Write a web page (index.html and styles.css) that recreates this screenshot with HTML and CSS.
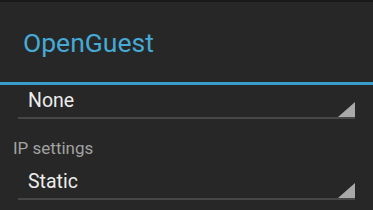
FILE: index.html
```html
<!DOCTYPE html>
<html>
<head>
<meta charset="utf-8">
<link rel="stylesheet" href="styles.css">
</head>
<body>
<div class="screen">
  <div class="topline"></div>
  <div class="header"><span class="title">OpenGuest</span></div>
  <div class="divider"></div>
  <div class="content">
    <div class="spinner first">
      <span class="value">None</span>
      <svg class="tri" width="17" height="15" viewBox="0 0 17 15"><polygon points="17,0 17,15 0,15" fill="#a9a9a9"/></svg>
    </div>
    <div class="label">IP settings</div>
    <div class="spinner">
      <span class="value">Static</span>
      <svg class="tri" width="17" height="15" viewBox="0 0 17 15"><polygon points="17,0 17,15 0,15" fill="#a9a9a9"/></svg>
    </div>
  </div>
</div>
</body>
</html>
```
FILE: styles.css
```css
html, body {
  margin: 0;
  padding: 0;
  background: #272727;
}
.screen {
  width: 373px;
  height: 210px;
  overflow: hidden;
  background: #272727;
  font-family: Roboto, "Noto Sans", sans-serif;
}
.topline {
  height: 2px;
  background: #1a1a1a;
}
.header {
  height: 80px;
  display: flex;
  align-items: center;
  padding-left: 23px;
}
.title {
  font-size: 26.5px;
  color: #45aad6;
  line-height: 1;
  margin-top: 2px;
}
.divider {
  height: 3px;
  background: #3a9dcc;
}
.content {
  padding: 0 18px 0 13px;
}
.spinner {
  margin-left: 5px;
  display: flex;
  justify-content: space-between;
  align-items: flex-end;
  border-bottom: 2px solid #474747;
}
.spinner.first {
  height: 32px;
}
.spinner .value {
  font-size: 19.5px;
  line-height: 22px;
  color: #ececec;
  padding-left: 10px;
  padding-bottom: 5px;
}
.tri {
  display: block;
}
.label {
  font-size: 17px;
  color: #a2a2a2;
  line-height: 20px;
  margin-top: 19px;
}
.spinner:not(.first) {
  height: 40px;
}
```
